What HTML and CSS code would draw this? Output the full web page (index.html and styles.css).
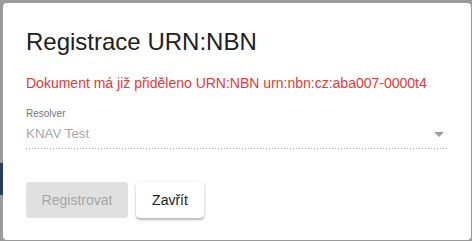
FILE: index.html
```html
<!DOCTYPE html>
<html>
<head>
<meta charset="utf-8">
<link rel="stylesheet" href="styles.css">
</head>
<body>
<div class="backdrop">
  <div class="strip"><div class="blue"></div></div>
  <div class="dialog">
    <h2 class="title">Registrace URN:NBN</h2>
    <div class="error">Dokument má již přiděleno URN:NBN urn:nbn:cz:aba007-0000t4</div>
    <div class="field">
      <div class="label">Resolver</div>
      <div class="select">
        <span class="value">KNAV Test</span>
        <span class="arrow"></span>
      </div>
      <div class="underline"></div>
    </div>
    <div class="actions">
      <button class="btn btn-disabled" disabled>Registrovat</button>
      <button class="btn btn-raised">Zavřít</button>
    </div>
  </div>
</div>
</body>
</html>
```
FILE: styles.css
```css
html, body {
  margin: 0;
  padding: 0;
  width: 472px;
  height: 241px;
  overflow: hidden;
  background: #9b9b9b;
  font-family: "Liberation Sans", Arial, sans-serif;
}
.backdrop {
  display: flex;
  padding-top: 3px;
  height: 241px;
  box-sizing: border-box;
}
.strip {
  width: 3px;
  flex: none;
  display: flex;
  flex-direction: column;
  padding-top: 160px;
}
.blue {
  height: 32px;
  background: #2a3b5c;
}
.dialog {
  width: 468px;
  height: 237px;
  background: #fff;
  border-radius: 4px;
  box-sizing: border-box;
  padding: 25px 23px 0 23px;
}
.title {
  margin: 0;
  font-weight: 400;
  font-size: 24px;
  line-height: 28px;
  color: #212121;
}
.error {
  margin-top: 19px;
  font-size: 14px;
  line-height: 16px;
  color: #e53935;
}
.field {
  margin-top: 17px;
  width: 421px;
}
.label {
  font-size: 10px;
  line-height: 12px;
  color: #757575;
}
.select {
  display: flex;
  align-items: center;
  justify-content: space-between;
  margin-top: 6px;
  padding-bottom: 6px;
}
.underline {
  height: 1px;
  background-image: linear-gradient(to right, #a8a8a8 1px, transparent 1px);
  background-size: 3px 1px;
  background-repeat: repeat-x;
}
.value {
  font-size: 13.33px;
  line-height: 16px;
  color: #a8a8a8;
}
.arrow {
  width: 0;
  height: 0;
  border-left: 5px solid transparent;
  border-right: 5px solid transparent;
  border-top: 5px solid #9e9e9e;
  margin-right: 3px;
}
.actions {
  display: flex;
  gap: 8px;
  margin-top: 33px;
}
.btn {
  height: 36px;
  border: none;
  border-radius: 4px;
  font-family: "Liberation Sans", Arial, sans-serif;
  font-size: 14px;
  padding: 0;
}
.btn-disabled {
  background: #e0e0e0;
  color: #a6a6a6;
  width: 102px;
}
.btn-raised {
  background: #fff;
  color: #212121;
  width: 68px;
  box-shadow: 0 2px 2px rgba(0,0,0,0.2), 0 1px 4px rgba(0,0,0,0.14);
}
```
